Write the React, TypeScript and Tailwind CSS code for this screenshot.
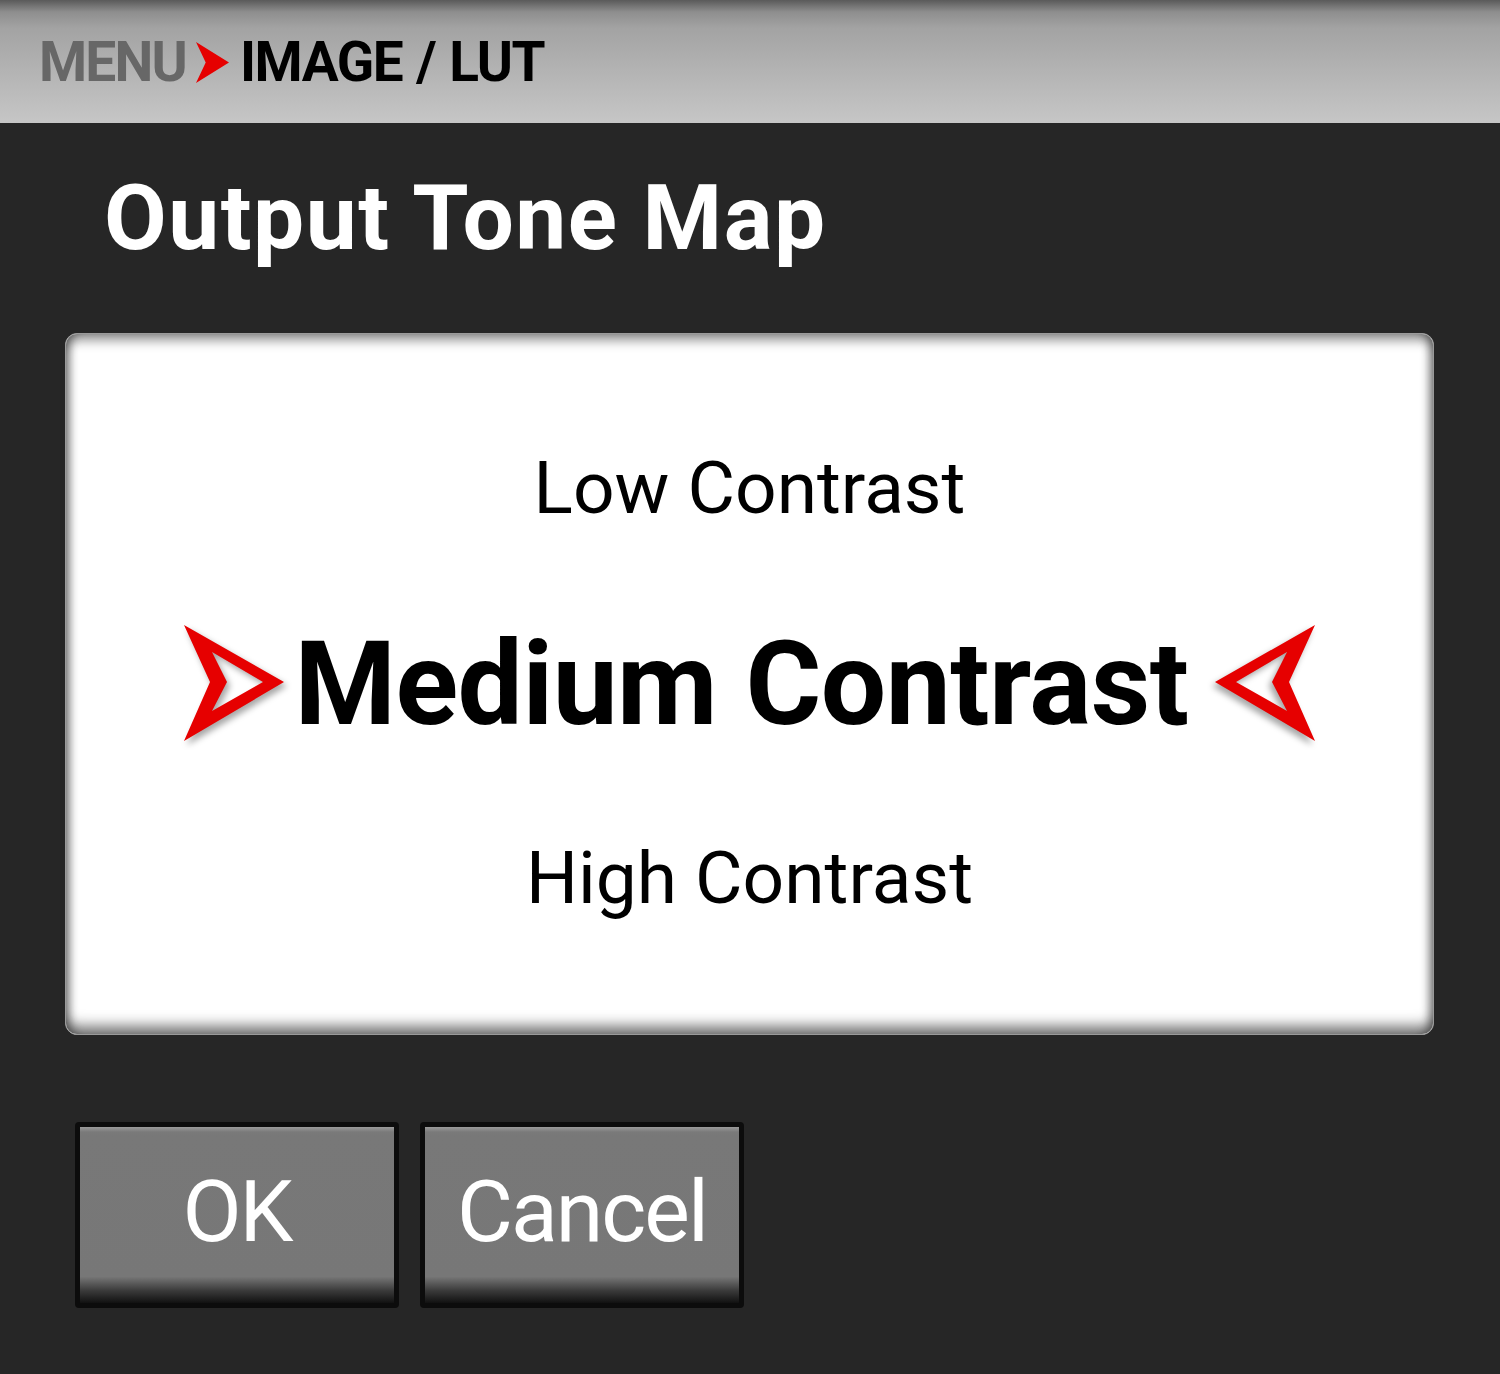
import React from 'react';

// red outlined chevron used around the selected option
function Chevron({ flip = false }: { flip?: boolean }) {
  return (
    <svg
      width="100"
      height="117"
      viewBox="0 0 100 117"
      className={`shrink-0 drop-shadow-[3px_4px_3px_rgba(0,0,0,0.35)] ${flip ? '-scale-x-100' : ''}`}
    >
      <path
        fillRule="evenodd"
        fill="#e60000"
        d="M0 0 L100 57 L0 116 L26 57 Z M28 27 L43 57 L28 86 L79 57 Z"
      />
    </svg>
  );
}

function HeaderArrow() {
  return (
    <svg width="33" height="41" viewBox="0 0 34 42" className="ml-[10px] mr-[11px] shrink-0">
      <path d="M0 0 L34 21 L0 42 L10 21 Z" fill="#e60000" />
    </svg>
  );
}

function DialogButton({ label }: { label: string }) {
  return (
    <button className="w-[324px] h-[186px] rounded-[4px] bg-[#0c0c0c] p-[5px]">
      <div className="h-full w-full flex items-center justify-center bg-[linear-gradient(to_bottom,#9a9a9a_0px,#7a7a7a_5px,#787878_8px,#777777_85%,#3a3a3a_93%,#111111_100%)]">
        <span className="text-white text-[86px] leading-none tracking-[-2px] pb-[6px]">{label}</span>
      </div>
    </button>
  );
}

const options = ['Low Contrast', 'Medium Contrast', 'High Contrast'];
const selected = 1;

export default function App() {
  return (
    <div className="w-[1500px] h-[1374px] bg-[#262626] font-['Roboto',sans-serif] overflow-hidden">
      {/* breadcrumb bar */}
      <div className="h-[123px] flex items-center pl-[39px] pt-[2px] bg-[linear-gradient(to_bottom,#5a5a5a_0px,#8e8e8e_12px,#a3a3a3_28px,#b3b3b3_70px,#c6c6c6_100%)]">
        <span className="text-[55px] leading-none font-bold tracking-[-1.8px] text-[#676767]">MENU</span>
        <HeaderArrow />
        <span className="text-[55px] leading-none font-bold tracking-[-1.5px] text-black">
          IMAGE<span className="mx-[2px]"> / </span>LUT
        </span>
      </div>

      <h1 className="mt-[50px] pl-[104px] text-[91px] leading-none font-bold text-white tracking-[1.5px]">
        Output Tone Map
      </h1>

      {/* option picker */}
      <div className="ml-[65px] mt-[69px] w-[1369px] h-[702px] rounded-[12px] bg-white flex flex-col pt-[57px] shadow-[inset_0_10px_12px_-4px_rgba(0,0,0,0.45),inset_0_-12px_14px_-4px_rgba(0,0,0,0.55),inset_10px_0_10px_-6px_rgba(0,0,0,0.35),inset_-10px_0_10px_-6px_rgba(0,0,0,0.35)] border border-[#9a9a9a]">
        {options.map((opt, i) =>
          i === selected ? (
            <div key={opt} className="h-[195px] flex items-center justify-center">
              <Chevron />
              <span className="ml-[10px] mr-[26px] text-[116px] leading-none font-bold text-black tracking-[-0.5px]">
                {opt}
              </span>
              <Chevron flip />
            </div>
          ) : (
            <div key={opt} className="h-[195px] flex items-center justify-center">
              <span className="text-[73px] leading-none text-black">{opt}</span>
            </div>
          )
        )}
      </div>

      <div className="mt-[87px] ml-[75px] flex gap-[21px]">
        <DialogButton label="OK" />
        <DialogButton label="Cancel" />
      </div>
    </div>
  );
}
